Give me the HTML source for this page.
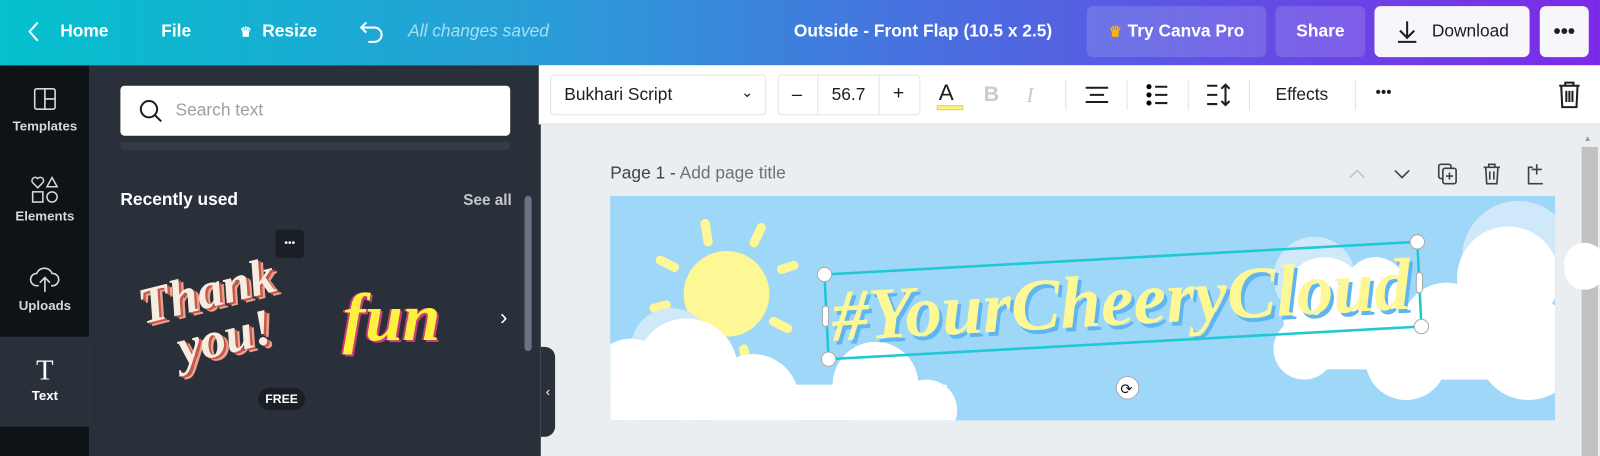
<!DOCTYPE html>
<html><head><meta charset="utf-8"><style>
*{margin:0;padding:0;box-sizing:border-box}
body{width:1600px;height:456px;overflow:hidden;font-family:"Liberation Sans",sans-serif;background:#ebeef1;position:relative}
#w{position:absolute;left:0;top:0;width:1568px;height:447px;transform:scale(1.0204);transform-origin:0 0;overflow:hidden;background:#ebeef1}
.abs{position:absolute}
.top{left:0;top:0;width:1568px;height:64px;background:linear-gradient(90deg,#04c1cc 0%,#2b9bd8 35%,#4b6ce0 60%,#7d2ae8 100%);color:#fff;font-size:17px;font-weight:bold}
.top span{position:absolute;top:21px}
.btn{position:absolute;top:6px;height:50px;border-radius:6px;display:flex;align-items:center;justify-content:center;font-size:17px;font-weight:bold}
.rail{left:0;top:64px;width:88px;height:392px;background:#0e1318}
.rail .it{position:absolute;left:0;width:88px;text-align:center;color:#d5d8dc;font-size:13px;font-weight:bold}
.panel{left:88px;top:64px;width:442px;height:392px;background:#293039}
.tool{left:528px;top:64px;width:1040px;height:58px;background:#fff;border-bottom:1px solid #dfe3e8;font-size:17px;color:#1e1e1e}
.sep{position:absolute;top:14px;width:1px;height:30px;background:#e0e3e7}
</style></head><body><div id="w">
<div class="abs top">
<svg class="abs" style="left:26px;top:20px" width="14" height="22"><path d="M11 2L3 11L11 20" stroke="#fff" stroke-width="2" fill="none"/></svg>
<span style="left:59px">Home</span><span style="left:158px">File</span>
<span style="left:235px;font-size:13px;top:24px">♛</span><span style="left:257px">Resize</span>
<svg class="abs" style="left:352px;top:19px" width="26" height="24"><path d="M7 3L2 8L7 13M2 8H15a7 7 0 0 1 0 14H9" stroke="#fff" stroke-width="2" fill="none"/></svg>
<span style="left:400px;font-weight:normal;font-style:italic;color:#a6e0f0">All changes saved</span>
<span style="left:778px">Outside - Front Flap (10.5 x 2.5)</span>
<div class="btn" style="left:1065px;width:176px;background:rgba(255,255,255,.14)"><span style="position:static;color:#ffb400;font-size:14px;margin-right:6px">♛</span>Try Canva Pro</div>
<div class="btn" style="left:1250px;width:88px;background:rgba(255,255,255,.14)">Share</div>
<div class="btn" style="left:1347px;width:152px;background:#f7f6fb;color:#1e1e1e;font-weight:normal">
<svg width="24" height="24" style="margin-right:12px"><path d="M12 2V17M5 11L12 18L19 11M3 22H21" stroke="#1e1e1e" stroke-width="2" fill="none"/></svg>Download</div>
<div class="btn" style="left:1509px;width:48px;background:#f7f6fb;color:#1e1e1e;font-size:20px">•••</div>
</div>
<div class="abs rail">
<svg class="abs" style="left:33px;top:22px" width="22" height="22"><rect x="1" y="1" width="20" height="20" rx="2" stroke="#d5d8dc" stroke-width="1.6" fill="none"/><path d="M11 1V21M11 11H21" stroke="#d5d8dc" stroke-width="1.6"/></svg>
<div class="it" style="top:52px">Templates</div>
<svg class="abs" style="left:30px;top:108px" width="28" height="28"><path d="M7 12L2 7a3 3 0 0 1 5-4a3 3 0 0 1 5 4z" stroke="#d5d8dc" stroke-width="1.5" fill="none"/><path d="M21 2L26 11H16z" stroke="#d5d8dc" stroke-width="1.5" fill="none"/><rect x="2" y="16" width="10" height="10" stroke="#d5d8dc" stroke-width="1.5" fill="none"/><circle cx="21" cy="21" r="5" stroke="#d5d8dc" stroke-width="1.5" fill="none"/></svg>
<div class="it" style="top:140px">Elements</div>
<svg class="abs" style="left:29px;top:196px" width="30" height="28"><path d="M9 20H7a6 6 0 0 1 0-12a8 8 0 0 1 15 0a6 6 0 0 1 1 12h-2M15 26V13M10 17L15 12L20 17" stroke="#d5d8dc" stroke-width="1.6" fill="none"/></svg>
<div class="it" style="top:228px">Uploads</div>
<div class="abs" style="left:0;top:266px;width:88px;height:88px;background:#293039"></div>
<div class="it" style="top:284px;font-size:28px;font-family:'Liberation Serif',serif;font-weight:normal;color:#fff">T</div>
<div class="it" style="top:316px;color:#fff">Text</div>
</div>
<div class="abs panel">
<div class="abs" style="left:30px;top:20px;width:382px;height:49px;background:#fff;border-radius:4px"></div>
<svg class="abs" style="left:48px;top:33px" width="24" height="24"><circle cx="10" cy="10" r="8" stroke="#1e1e1e" stroke-width="2" fill="none"/><path d="M16 16L22 22" stroke="#1e1e1e" stroke-width="2"/></svg>
<div class="abs" style="left:84px;top:34px;color:#9aa0a6;font-size:17px">Search text</div>
<div class="abs" style="left:30px;top:75px;width:382px;height:8px;background:#333b45;border-radius:0 0 4px 4px"></div>
<div class="abs" style="left:30px;top:122px;color:#fff;font-weight:bold;font-size:17px">Recently used</div>
<div class="abs" style="left:366px;top:124px;color:#c4c8cc;font-weight:bold;font-size:15px">See all</div>
<div class="abs" style="left:426px;top:128px;width:7px;height:152px;background:#6b7280;border-radius:4px"></div>
<div class="abs" style="left:182px;top:161px;width:28px;height:28px;background:#1a1f25;border-radius:4px;color:#fff;text-align:center;font-size:10px;line-height:28px">•••</div>
<div class="abs" style="left:52px;top:196px;transform:rotate(-14deg);color:#f6ede0;font:italic bold 50px 'Liberation Serif',serif;line-height:48px;text-align:center;text-shadow:2px 2px 0 #c9564a,4px 4px 0 #e9a08d">Thank<br>&nbsp;you!</div>
<div class="abs" style="left:248px;top:210px;color:#fff23e;font:italic bold 66px 'Liberation Serif',serif;text-shadow:-2px 0 0 #c83c7a,2px 2px 0 #c83c7a">fun</div>
<div class="abs" style="left:402px;top:234px;color:#fff;font-size:22px">›</div>
<div class="abs" style="left:165px;top:316px;width:46px;height:22px;background:#1a1f25;border-radius:11px;color:#fff;font-size:12px;font-weight:bold;text-align:center;line-height:22px">FREE</div>
</div>
<div class="abs" style="left:530px;top:340px;width:14px;height:88px;background:#293039;border-radius:0 10px 10px 0;color:#fff;font-size:13px;text-align:center;line-height:88px">‹</div>
<div class="abs tool">
<div class="abs" style="left:11px;top:9px;width:212px;height:40px;border:1px solid #dfe3e8;border-radius:4px;padding:9px 13px">Bukhari Script<span style="position:absolute;right:12px;top:8px;font-size:14px">⌄</span></div>
<div class="abs" style="left:234px;top:9px;width:140px;height:40px;border:1px solid #dfe3e8;border-radius:4px"></div>
<div class="abs" style="left:273px;top:9px;width:1px;height:40px;background:#dfe3e8"></div>
<div class="abs" style="left:333px;top:9px;width:1px;height:40px;background:#dfe3e8"></div>
<div class="abs" style="left:248px;top:18px;font-size:18px">–</div>
<div class="abs" style="left:287px;top:19px">56.7</div>
<div class="abs" style="left:347px;top:17px;font-size:19px">+</div>
<div class="abs" style="left:392px;top:14px;font-size:22px">A</div>
<div class="abs" style="left:390px;top:39px;width:26px;height:5px;background:#fbf27c;border:1px solid #d9d27a"></div>
<div class="abs" style="left:436px;top:17px;font-size:21px;font-weight:bold;color:#c8ccd0">B</div>
<div class="abs" style="left:478px;top:17px;font-size:21px;font-style:italic;font-family:'Liberation Serif',serif;color:#c8ccd0">I</div>
<div class="sep" style="left:516px"></div>
<svg class="abs" style="left:534px;top:19px" width="26" height="20"><path d="M2 3H24M6 10H20M2 17H24" stroke="#1e1e1e" stroke-width="2"/></svg>
<div class="sep" style="left:576px"></div>
<svg class="abs" style="left:594px;top:18px" width="26" height="22"><circle cx="4" cy="3" r="2.5"/><circle cx="4" cy="11" r="2.5"/><circle cx="4" cy="19" r="2.5"/><path d="M10 3H22M10 11H22M10 19H22" stroke="#1e1e1e" stroke-width="2"/></svg>
<div class="sep" style="left:636px"></div>
<svg class="abs" style="left:653px;top:17px" width="28" height="24"><path d="M2 3H12M2 12H12M2 21H12M20 2V22M16 6L20 2L24 6M16 18L20 22L24 18" stroke="#1e1e1e" stroke-width="2" fill="none"/></svg>
<div class="sep" style="left:696px"></div>
<div class="abs" style="left:722px;top:19px">Effects</div>
<div class="sep" style="left:800px"></div>
<div class="abs" style="left:820px;top:18px;font-size:15px">•••</div>
<svg class="abs" style="left:998px;top:15px" width="24" height="28"><path d="M2 5H22M8 5V2H16V5M4 5L5 26H19L20 5M9 10V21M12 10V21M15 10V21" stroke="#1e1e1e" stroke-width="2" fill="none"/></svg>
</div>
<div class="abs" style="left:1548px;top:122px;width:20px;height:334px;background:#ebeef1"></div>
<div class="abs" style="left:1552px;top:131px;font-size:8px;color:#999">▲</div>
<div class="abs" style="left:1550px;top:144px;width:16px;height:313px;background:#c1c1c1"></div>
<div class="abs" style="left:598px;top:160px;font-size:17px;color:#3d4249">Page 1 - <span style="color:#6b7177">Add page title</span></div>
<svg class="abs" style="left:1320px;top:162px" width="70" height="16"><path d="M3 12L10 5L17 12" stroke="#c0c4c8" stroke-width="1.6" fill="none"/><path d="M47 5L54 12L61 5" stroke="#3d4249" stroke-width="1.6" fill="none"/></svg>
<svg class="abs" style="left:1408px;top:159px" width="104" height="24"><rect x="2" y="2" width="12" height="14" rx="2" stroke="#3d4249" stroke-width="1.6" fill="none"/><rect x="6" y="6" width="13" height="15" rx="2" stroke="#3d4249" stroke-width="1.6" fill="#ebeef1"/><path d="M12.5 10V17M9 13.5H16" stroke="#3d4249" stroke-width="1.6"/><path d="M46 5H62M51 5V2H57V5M48 5L49 21H59L60 5M52 9V17M56 9V17" stroke="#3d4249" stroke-width="1.6" fill="none"/><path d="M94 5H90V21H106V11M98 2V12M93 7H103" stroke="#3d4249" stroke-width="1.6" fill="none"/></svg>
<div class="abs" style="left:598px;top:192px;width:926px;height:220px;background:#9fd7f9;overflow:hidden">
<svg class="abs" style="left:0;top:0" width="926" height="220">
<g fill="#fdf895" stroke="#fdf895" stroke-linecap="round" stroke-width="9"><circle cx="114" cy="96" r="42" stroke="none"/><path d="M93 27L96 45M148 31L141 46M49 63L63 70M168 72L180 68M43 110L55 107M160 123L174 130M131 150L133 163"/></g>
<g fill="#cfe9fb"><circle cx="60" cy="150" r="40"/><circle cx="690" cy="80" r="40"/><circle cx="890" cy="60" r="55"/></g>
<g fill="#fff"><circle cx="75" cy="170" r="50"/><circle cx="20" cy="180" r="40"/><circle cx="140" cy="200" r="45"/><circle cx="260" cy="185" r="42"/><circle cx="310" cy="210" r="30"/><rect x="0" y="185" width="330" height="40"/>
<circle cx="700" cy="100" r="40"/><circle cx="750" cy="90" r="30"/><circle cx="680" cy="150" r="30"/><rect x="660" y="110" width="150" height="60"/>
<circle cx="880" cy="80" r="50"/><circle cx="820" cy="130" r="45"/><circle cx="780" cy="160" r="40"/><circle cx="900" cy="150" r="50"/><rect x="770" y="110" width="160" height="70"/></g>
</svg>
<div class="abs" style="left:217px;top:78px;width:580px;transform:rotate(-3.2deg);transform-origin:left center;color:#fdf895;font:italic bold 72px 'Liberation Serif',serif;letter-spacing:0px;text-shadow:3px 4px 0 #5fb4f2;white-space:nowrap;line-height:80px">#YourCheeryCloud</div>
<svg class="abs" style="left:0;top:0" width="926" height="220"><g stroke="#1ec8d4" stroke-width="2.5" fill="none"><path d="M210 77L791 45L795 128L214 160Z"/></g>
<g fill="#fff" stroke="#aaa" stroke-width="1"><circle cx="210" cy="77" r="7"/><circle cx="791" cy="45" r="7"/><circle cx="795" cy="128" r="7"/><circle cx="214" cy="160" r="7"/><rect x="208" y="108" width="6" height="20" rx="3"/><rect x="790" y="75" width="6" height="20" rx="3"/><circle cx="507" cy="188" r="11"/></g>
<text x="500" y="194" font-size="14" fill="#111">⟳</text></svg>
</div>
<div class="abs" style="left:1533px;top:238px;width:40px;height:46px;border-radius:23px;background:#fff"></div>
</div></body></html>
